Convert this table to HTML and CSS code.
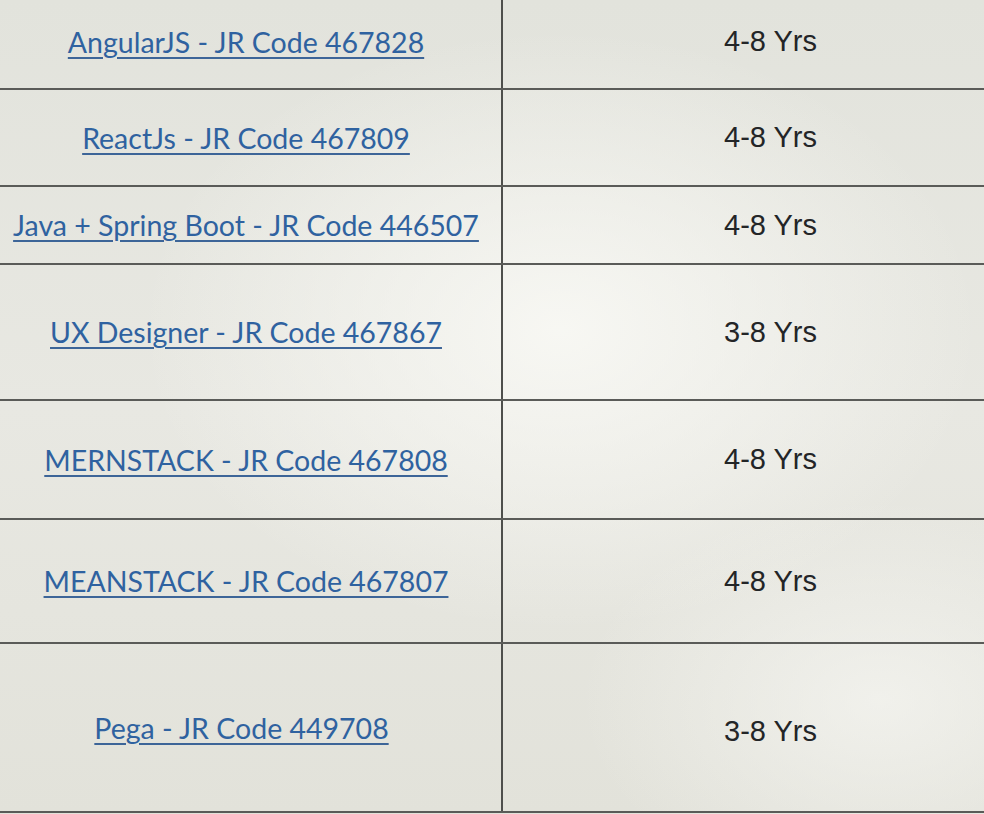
FILE: index.html
```html
<!DOCTYPE html>
<html lang="en">
<head>
<meta charset="utf-8">
<title>Openings</title>
<link rel="stylesheet" href="styles.css">
</head>
<body>
<div class="screen">
  <table class="jobs">
    <tbody>
      <tr class="r1"><td class="role"><a href="#">AngularJS - JR Code 467828</a></td><td class="exp">4-8 Yrs</td></tr>
      <tr class="r2"><td class="role"><a href="#">ReactJs - JR Code 467809</a></td><td class="exp">4-8 Yrs</td></tr>
      <tr class="r3"><td class="role"><a href="#">Java + Spring Boot - JR Code 446507</a></td><td class="exp">4-8 Yrs</td></tr>
      <tr class="r4"><td class="role"><a href="#">UX Designer - JR Code 467867</a></td><td class="exp">3-8 Yrs</td></tr>
      <tr class="r5"><td class="role"><a href="#">MERNSTACK - JR Code 467808</a></td><td class="exp">4-8 Yrs</td></tr>
      <tr class="r6"><td class="role"><a href="#">MEANSTACK - JR Code 467807</a></td><td class="exp">4-8 Yrs</td></tr>
      <tr class="r7"><td class="role"><a href="#">Pega - JR Code 449708</a></td><td class="exp">3-8 Yrs</td></tr>
    </tbody>
  </table>
</div>
</body>
</html>
```
FILE: styles.css
```css
html, body {
  margin: 0;
  padding: 0;
}
body {
  width: 984px;
  height: 814px;
  overflow: hidden;
  background: #e4e4dd;
}
.screen {
  width: 984px;
  height: 814px;
  overflow: hidden;
  background:
    radial-gradient(ellipse 420px 300px at 560px 330px, rgba(250,250,246,0.85), rgba(250,250,246,0) 100%),
    radial-gradient(ellipse 300px 200px at 880px 700px, rgba(246,246,242,0.7), rgba(246,246,242,0) 100%),
    linear-gradient(180deg, #e2e3dc 0%, #e8e8e2 50%, #e2e2da 100%);
}
.jobs {
  border-collapse: collapse;
  table-layout: fixed;
  width: 1038px;
}
.jobs td {
  padding: 0;
  text-align: center;
  vertical-align: middle;
  border-bottom: 2px solid #5a5b58;
}
.jobs td.role {
  width: 492px;
  padding-right: 9px;
  border-right: 2px solid #4e4f4c;
  font-family: Lato, "Open Sans", sans-serif;
  font-size: 28.5px;
}
.jobs td.exp {
  font-family: "Liberation Sans", Arial, sans-serif;
  font-size: 29px;
  color: #232527;
}
.role a {
  color: #2f62a0;
  text-decoration: underline;
  text-decoration-thickness: 1.5px;
  text-underline-offset: 4px;
  text-decoration-color: #3d6598;
}
.r1 { height: 89px; }
.r1 td { padding-bottom: 5px; }
.r2 { height: 97px; }
.r3 { height: 78px; }
.r4 { height: 136px; }
.r5 { height: 119px; }
.r6 { height: 124px; }
.r7 { height: 169px; }
.r7 td.exp { padding-top: 8px; }
.r7 td.role { padding-right: 18px; }
```
